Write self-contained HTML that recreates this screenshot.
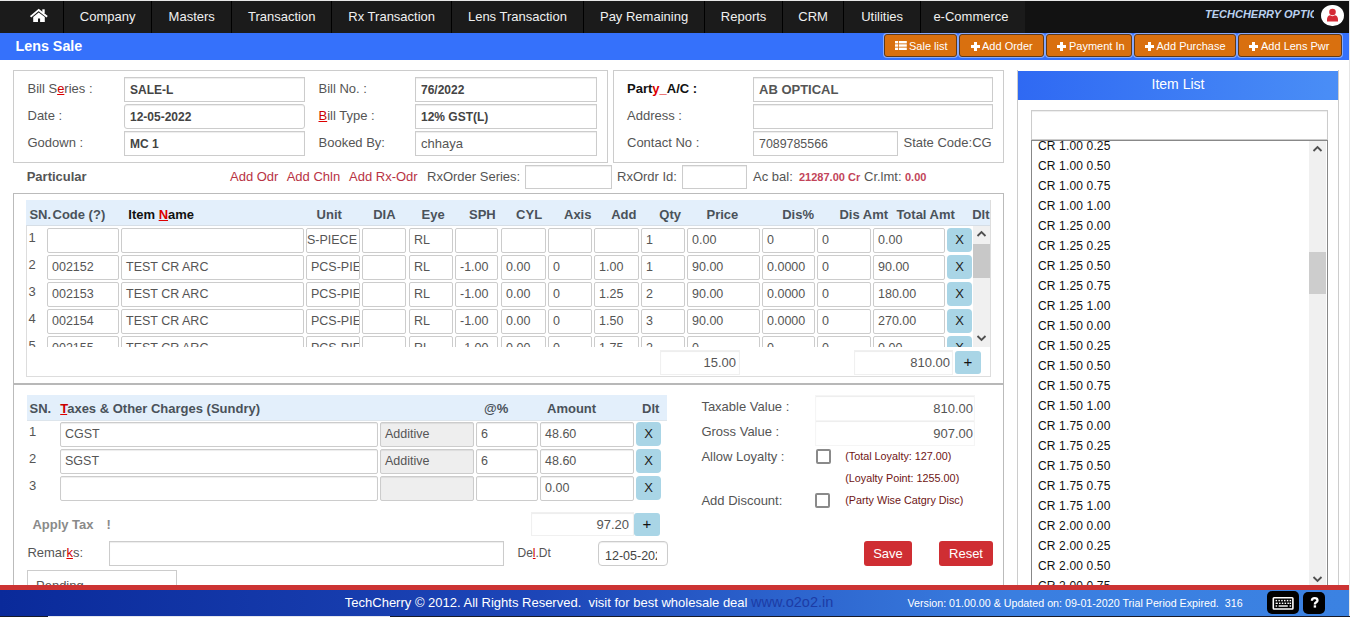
<!DOCTYPE html><html><head><meta charset="utf-8"><style>
*{margin:0;padding:0;box-sizing:content-box}
html,body{width:1350px;height:617px;overflow:hidden;background:#fff;font-family:"Liberation Sans",sans-serif}
body>div{position:absolute}
.t{position:absolute;line-height:1;white-space:nowrap}
u{text-decoration:underline;text-decoration-color:#d00;text-underline-offset:1px;color:#c00}
</style></head><body><div style="left:0px;top:0px;width:1350px;height:1px;background:#e8e8e8"></div>
<div style="left:0px;top:1px;width:1349px;height:32px;background:#121212"></div>
<div style="left:0px;top:1px;width:1025px;height:32px;background:#1b1b1b"></div>
<div style="left:63px;top:1px;width:1px;height:32px;background:#000"></div>
<div style="left:151px;top:1px;width:1px;height:32px;background:#000"></div>
<div style="left:231px;top:1px;width:1px;height:32px;background:#000"></div>
<div style="left:331px;top:1px;width:1px;height:32px;background:#000"></div>
<div style="left:451px;top:1px;width:1px;height:32px;background:#000"></div>
<div style="left:583px;top:1px;width:1px;height:32px;background:#000"></div>
<div style="left:704px;top:1px;width:1px;height:32px;background:#000"></div>
<div style="left:782px;top:1px;width:1px;height:32px;background:#000"></div>
<div style="left:843px;top:1px;width:1px;height:32px;background:#000"></div>
<div style="left:920px;top:1px;width:1px;height:32px;background:#000"></div>
<svg style="position:absolute;left:26px;top:5px" width="26" height="22" viewBox="0 0 26 22"><path d="M5.3 11.2 L12.7 4.9 L20.4 11.2" stroke="#fff" stroke-width="1.9" fill="none" stroke-linecap="square"/><rect x="16.3" y="4.3" width="2.4" height="3.8" fill="#fff"/><path d="M7.2 12 L12.7 7.4 L18.8 12 V16.9 H14.1 V13.4 H12 V16.9 H7.2 Z" fill="#fff"/></svg>
<div class="t" style="left:63.5px;width:88.30000000000001px;text-align:center;top:10.40px;font-size:13px;color:#f0f0f0">Company</div>
<div class="t" style="left:151.8px;width:79.79999999999998px;text-align:center;top:10.40px;font-size:13px;color:#f0f0f0">Masters</div>
<div class="t" style="left:231.6px;width:100.20000000000002px;text-align:center;top:10.40px;font-size:13px;color:#f0f0f0">Transaction</div>
<div class="t" style="left:331.8px;width:119.80000000000001px;text-align:center;top:10.40px;font-size:13px;color:#f0f0f0">Rx Transaction</div>
<div class="t" style="left:451.6px;width:131.69999999999993px;text-align:center;top:10.40px;font-size:13px;color:#f0f0f0">Lens Transaction</div>
<div class="t" style="left:583.3px;width:121.5px;text-align:center;top:10.40px;font-size:13px;color:#f0f0f0">Pay Remaining</div>
<div class="t" style="left:704.8px;width:77.60000000000002px;text-align:center;top:10.40px;font-size:13px;color:#f0f0f0">Reports</div>
<div class="t" style="left:782.4px;width:61.5px;text-align:center;top:10.40px;font-size:13px;color:#f0f0f0">CRM</div>
<div class="t" style="left:843.9px;width:76.5px;text-align:center;top:10.40px;font-size:13px;color:#f0f0f0">Utilities</div>
<div class="t" style="left:920.4px;width:101.10000000000002px;text-align:center;top:10.40px;font-size:13px;color:#f0f0f0">e-Commerce</div>
<div class="t " style="left:1205px;top:8.69px;font-size:11px;font-weight:bold;color:#b9d0ee;font-style:italic;width:109px;overflow:hidden">TECHCHERRY OPTIC</div>
<div style="left:1321px;top:4.6px;width:23px;height:21.8px;border-radius:50%;background:#fff"></div>
<svg style="position:absolute;left:1326px;top:8px" width="13" height="14" viewBox="0 0 13 14"><circle cx="6.5" cy="4" r="3.3" fill="#d42a35"/><path d="M1 13.5 Q0.6 7.6 4 7.3 L6.5 8.2 L9 7.3 Q12.4 7.6 12 13.5 Z" fill="#d42a35"/></svg>
<div style="left:0px;top:33px;width:1349px;height:27px;background:#3571fb"></div>
<div class="t " style="left:15.5px;top:38.70px;font-size:14.3px;font-weight:bold;color:#fff;">Lens Sale</div>
<div style="left:884px;top:34px;width:71px;height:21px;background:#d9700f;border:1px solid #5e3a1c;border-radius:3px;box-shadow:0 0 0 1px rgba(200,215,255,.55)"></div>
<div style="left:959px;top:34px;width:83px;height:21px;background:#d9700f;border:1px solid #5e3a1c;border-radius:3px;box-shadow:0 0 0 1px rgba(200,215,255,.55)"></div>
<div style="left:1046px;top:34px;width:84px;height:21px;background:#d9700f;border:1px solid #5e3a1c;border-radius:3px;box-shadow:0 0 0 1px rgba(200,215,255,.55)"></div>
<div style="left:1134px;top:34px;width:100px;height:21px;background:#d9700f;border:1px solid #5e3a1c;border-radius:3px;box-shadow:0 0 0 1px rgba(200,215,255,.55)"></div>
<div style="left:1238px;top:34px;width:102px;height:21px;background:#d9700f;border:1px solid #5e3a1c;border-radius:3px;box-shadow:0 0 0 1px rgba(200,215,255,.55)"></div>
<svg style="position:absolute;left:895px;top:41px" width="12" height="9" viewBox="0 0 12 9"><g fill="#fff"><rect x="0" y="0" width="3" height="2.4"/><rect x="3.8" y="0" width="8" height="2.4"/><rect x="0" y="3.3" width="3" height="2.4"/><rect x="3.8" y="3.3" width="8" height="2.4"/><rect x="0" y="6.6" width="3" height="2.4"/><rect x="3.8" y="6.6" width="8" height="2.4"/></g></svg>
<svg style="position:absolute;left:970.5px;top:41.5px" width="9" height="9" viewBox="0 0 9 9"><path d="M3 0H6V3H9V6H6V9H3V6H0V3H3Z" fill="#fff"/></svg>
<svg style="position:absolute;left:1056.8px;top:41.5px" width="9" height="9" viewBox="0 0 9 9"><path d="M3 0H6V3H9V6H6V9H3V6H0V3H3Z" fill="#fff"/></svg>
<svg style="position:absolute;left:1144.5px;top:41.5px" width="9" height="9" viewBox="0 0 9 9"><path d="M3 0H6V3H9V6H6V9H3V6H0V3H3Z" fill="#fff"/></svg>
<svg style="position:absolute;left:1249.2px;top:41.5px" width="9" height="9" viewBox="0 0 9 9"><path d="M3 0H6V3H9V6H6V9H3V6H0V3H3Z" fill="#fff"/></svg>
<div class="t " style="left:909px;top:40.69px;font-size:11px;color:#fff;">Sale list</div>
<div class="t " style="left:982px;top:40.69px;font-size:11px;color:#fff;">Add Order</div>
<div class="t " style="left:1069px;top:40.69px;font-size:11px;color:#fff;">Payment In</div>
<div class="t " style="left:1156.5px;top:40.69px;font-size:11px;color:#fff;">Add Purchase</div>
<div class="t " style="left:1261px;top:40.69px;font-size:11px;color:#fff;">Add Lens Pwr</div>
<div style="left:13px;top:70px;width:593px;height:91px;border:1px solid #ccc"></div>
<div style="left:613px;top:70px;width:389px;height:91px;border:1px solid #ccc"></div>
<div class="t " style="left:27.5px;top:81.50px;font-size:13px;color:#555;">Bill S<u>e</u>ries :</div>
<div style="left:124px;top:77px;width:179px;height:23px;border:1px solid #ccc;background:#fff;border-radius:0px;overflow:hidden;box-shadow:inset 0 1px 1px rgba(0,0,0,.075);"><span style="position:absolute;left:5px;top:5.72px;font-size:12px;font-weight:bold;color:#444;line-height:1;white-space:nowrap">SALE-L</span></div>
<div class="t " style="left:318.5px;top:81.50px;font-size:13px;color:#555;">Bill No. :</div>
<div style="left:415px;top:77px;width:180px;height:23px;border:1px solid #ccc;background:#fff;border-radius:0px;overflow:hidden;box-shadow:inset 0 1px 1px rgba(0,0,0,.075);"><span style="position:absolute;left:5px;top:5.72px;font-size:12px;font-weight:bold;color:#444;line-height:1;white-space:nowrap">76/2022</span></div>
<div class="t " style="left:27.5px;top:108.50px;font-size:13px;color:#555;">Date :</div>
<div style="left:124px;top:104px;width:179px;height:23px;border:1px solid #ccc;background:#fff;border-radius:3px;overflow:hidden;box-shadow:inset 0 1px 1px rgba(0,0,0,.075);"><span style="position:absolute;left:5px;top:5.72px;font-size:12px;font-weight:bold;color:#444;line-height:1;white-space:nowrap">12-05-2022</span></div>
<div class="t " style="left:318.5px;top:108.50px;font-size:13px;color:#555;"><u>B</u>ill Type :</div>
<div style="left:415px;top:104px;width:180px;height:23px;border:1px solid #ccc;background:#fff;border-radius:0px;overflow:hidden;box-shadow:inset 0 1px 1px rgba(0,0,0,.075);"><span style="position:absolute;left:5px;top:5.72px;font-size:12px;font-weight:bold;color:#444;line-height:1;white-space:nowrap">12% GST(L)</span></div>
<div class="t " style="left:27.5px;top:135.50px;font-size:13px;color:#555;">Godown :</div>
<div style="left:124px;top:131px;width:179px;height:23px;border:1px solid #ccc;background:#fff;border-radius:0px;overflow:hidden;box-shadow:inset 0 1px 1px rgba(0,0,0,.075);"><span style="position:absolute;left:5px;top:5.72px;font-size:12px;font-weight:bold;color:#444;line-height:1;white-space:nowrap">MC 1</span></div>
<div class="t " style="left:318.5px;top:135.50px;font-size:13px;color:#555;">Booked By:</div>
<div style="left:415px;top:131px;width:180px;height:23px;border:1px solid #ccc;background:#fff;border-radius:0px;overflow:hidden;box-shadow:inset 0 1px 1px rgba(0,0,0,.075);"><span style="position:absolute;left:5px;top:5.23px;font-size:13px;color:#555;line-height:1;white-space:nowrap">chhaya</span></div>
<div class="t " style="left:627px;top:81.50px;font-size:13px;font-weight:bold;color:#111;">Part<span style="color:#d00">y</span><span style="color:#d00">_</span>A/C :</div>
<div style="left:753px;top:77px;width:238px;height:23px;border:1px solid #ccc;background:#fff;border-radius:0px;overflow:hidden;box-shadow:inset 0 1px 1px rgba(0,0,0,.075);"><span style="position:absolute;left:5px;top:5.23px;font-size:13px;font-weight:bold;color:#555;line-height:1;white-space:nowrap">AB OPTICAL</span></div>
<div class="t " style="left:627px;top:108.50px;font-size:13px;color:#555;">Address :</div>
<div style="left:753px;top:104px;width:238px;height:23px;border:1px solid #ccc;background:#fff;border-radius:0px;overflow:hidden;box-shadow:inset 0 1px 1px rgba(0,0,0,.075);"></div>
<div class="t " style="left:627px;top:135.50px;font-size:13px;color:#555;">Contact No :</div>
<div style="left:753px;top:131px;width:143px;height:23px;border:1px solid #ccc;background:#fff;border-radius:0px;overflow:hidden;box-shadow:inset 0 1px 1px rgba(0,0,0,.075);"><span style="position:absolute;left:5px;top:5.52px;font-size:12.4px;color:#555;line-height:1;white-space:nowrap">7089785566</span></div>
<div class="t " style="left:903.5px;top:135.50px;font-size:13px;color:#555;">State Code:CG</div>
<div class="t " style="left:26.7px;top:170.10px;font-size:13px;font-weight:bold;color:#555;">Particular</div>
<div class="t " style="left:230px;top:170.10px;font-size:13px;color:#b83344;">Add Odr</div>
<div class="t " style="left:286.7px;top:170.10px;font-size:13px;color:#b83344;">Add Chln</div>
<div class="t " style="left:349px;top:170.10px;font-size:13px;color:#b83344;">Add Rx-Odr</div>
<div class="t " style="left:427px;top:170.10px;font-size:13px;color:#555;">RxOrder Series:</div>
<div style="left:525px;top:165px;width:85px;height:22px;border:1px solid #ccc;background:#fff;border-radius:0px;overflow:hidden;box-shadow:inset 0 1px 1px rgba(0,0,0,.075);"></div>
<div class="t " style="left:617px;top:170.10px;font-size:13px;color:#555;">RxOrdr Id:</div>
<div style="left:682px;top:165px;width:63px;height:22px;border:1px solid #ccc;background:#fff;border-radius:0px;overflow:hidden;box-shadow:inset 0 1px 1px rgba(0,0,0,.075);"></div>
<div class="t " style="left:753px;top:170.10px;font-size:13px;color:#555;">Ac bal:</div>
<div class="t " style="left:799px;top:171.79px;font-size:11px;font-weight:bold;color:#c24459;">21287.00 Cr</div>
<div class="t " style="left:864px;top:170.10px;font-size:13px;color:#555;">Cr.lmt:</div>
<div class="t " style="left:905px;top:171.79px;font-size:11px;font-weight:bold;color:#c24459;">0.00</div>
<div style="left:13px;top:193px;width:989px;height:500px;border:1px solid #bbb;border-bottom:none"></div>
<div style="left:26px;top:200px;width:963px;height:176px;border-left:1px solid #ddd;border-right:1px solid #ddd;border-bottom:1px solid #ddd"></div>
<div style="left:26px;top:200px;width:964px;height:26px;background:#e3effb"></div>
<div style="left:26px;top:225px;width:964px;height:1px;background:#d6dee6"></div>
<div style="left:14px;top:383px;width:989px;height:2px;background:#b8b8b8"></div>
<div class="t " style="left:29.4px;top:208.20px;font-size:13px;font-weight:bold;color:#4a525a;">SN.</div>
<div class="t " style="left:52.5px;top:208.20px;font-size:13px;font-weight:bold;color:#4a525a;">Code (?)</div>
<div class="t " style="left:128.3px;top:208.20px;font-size:13px;font-weight:bold;color:#111;">Item <u style="color:#d00">N</u>ame</div>
<div class="t " style="left:316.6px;top:208.20px;font-size:13px;font-weight:bold;color:#4a525a;">Unit</div>
<div class="t " style="left:373.2px;top:208.20px;font-size:13px;font-weight:bold;color:#4a525a;">DIA</div>
<div class="t " style="left:421.6px;top:208.20px;font-size:13px;font-weight:bold;color:#4a525a;">Eye</div>
<div class="t " style="left:469px;top:208.20px;font-size:13px;font-weight:bold;color:#4a525a;">SPH</div>
<div class="t " style="left:516.1px;top:208.20px;font-size:13px;font-weight:bold;color:#4a525a;">CYL</div>
<div class="t " style="left:564px;top:208.20px;font-size:13px;font-weight:bold;color:#4a525a;">Axis</div>
<div class="t " style="left:611.2px;top:208.20px;font-size:13px;font-weight:bold;color:#4a525a;">Add</div>
<div class="t " style="left:659.3px;top:208.20px;font-size:13px;font-weight:bold;color:#4a525a;">Qty</div>
<div class="t " style="left:706.5px;top:208.20px;font-size:13px;font-weight:bold;color:#4a525a;">Price</div>
<div class="t " style="left:782.2px;top:208.20px;font-size:13px;font-weight:bold;color:#4a525a;">Dis%</div>
<div class="t " style="left:839.4px;top:208.20px;font-size:13px;font-weight:bold;color:#4a525a;">Dis Amt</div>
<div class="t " style="left:896.4px;top:208.20px;font-size:13px;font-weight:bold;color:#4a525a;">Total Amt</div>
<div class="t " style="left:972.2px;top:208.20px;font-size:13px;font-weight:bold;color:#4a525a;">Dlt</div>
<div style="left:27px;top:226px;width:946px;height:121px;overflow:hidden">
<div class="t" style="left:1.6000000000000014px;top:4.80px;font-size:13px;color:#555">1</div>
<div style="position:absolute;left:20px;top:2px;width:70px;height:23px;border:1px solid #ccc;background:#fff;border-radius:2px;overflow:hidden"></div>
<div style="position:absolute;left:94px;top:2px;width:181px;height:23px;border:1px solid #ccc;background:#fff;border-radius:2px;overflow:hidden"></div>
<div style="position:absolute;left:279px;top:2px;width:52px;height:23px;border:1px solid #ccc;background:#fff;border-radius:2px;overflow:hidden"><span style="position:absolute;right:2px;top:5.2px;font-size:12.5px;color:#555;line-height:1;white-space:nowrap">PCS-PIECE</span></div>
<div style="position:absolute;left:335px;top:2px;width:42px;height:23px;border:1px solid #ccc;background:#fff;border-radius:2px;overflow:hidden"></div>
<div style="position:absolute;left:382px;top:2px;width:42px;height:23px;border:1px solid #ccc;background:#fff;border-radius:2px;overflow:hidden"><span style="position:absolute;left:4px;top:5.2px;font-size:12.5px;color:#555;line-height:1;white-space:nowrap">RL</span></div>
<div style="position:absolute;left:428px;top:2px;width:41px;height:23px;border:1px solid #ccc;background:#fff;border-radius:2px;overflow:hidden"></div>
<div style="position:absolute;left:474px;top:2px;width:43px;height:23px;border:1px solid #ccc;background:#fff;border-radius:2px;overflow:hidden"></div>
<div style="position:absolute;left:521px;top:2px;width:42px;height:23px;border:1px solid #ccc;background:#fff;border-radius:2px;overflow:hidden"></div>
<div style="position:absolute;left:567px;top:2px;width:43px;height:23px;border:1px solid #ccc;background:#fff;border-radius:2px;overflow:hidden"></div>
<div style="position:absolute;left:614px;top:2px;width:42px;height:23px;border:1px solid #ccc;background:#fff;border-radius:2px;overflow:hidden"><span style="position:absolute;left:4px;top:5.2px;font-size:12.5px;color:#555;line-height:1;white-space:nowrap">1</span></div>
<div style="position:absolute;left:660px;top:2px;width:71px;height:23px;border:1px solid #ccc;background:#fff;border-radius:2px;overflow:hidden"><span style="position:absolute;left:4px;top:5.2px;font-size:12.5px;color:#555;line-height:1;white-space:nowrap">0.00</span></div>
<div style="position:absolute;left:735px;top:2px;width:51px;height:23px;border:1px solid #ccc;background:#fff;border-radius:2px;overflow:hidden"><span style="position:absolute;left:4px;top:5.2px;font-size:12.5px;color:#555;line-height:1;white-space:nowrap">0</span></div>
<div style="position:absolute;left:790px;top:2px;width:52px;height:23px;border:1px solid #ccc;background:#fff;border-radius:2px;overflow:hidden"><span style="position:absolute;left:4px;top:5.2px;font-size:12.5px;color:#555;line-height:1;white-space:nowrap">0</span></div>
<div style="position:absolute;left:846px;top:2px;width:70px;height:23px;border:1px solid #ccc;background:#fff;border-radius:2px;overflow:hidden"><span style="position:absolute;left:4px;top:5.2px;font-size:12.5px;color:#555;line-height:1;white-space:nowrap">0.00</span></div>
<div style="position:absolute;left:920px;top:2px;width:25px;height:24px;background:#a9d5e6;border-radius:4px;color:#222;font-size:13px;line-height:24px;text-align:center">X</div>
<div class="t" style="left:1.6000000000000014px;top:31.80px;font-size:13px;color:#555">2</div>
<div style="position:absolute;left:20px;top:29px;width:70px;height:23px;border:1px solid #ccc;background:#fff;border-radius:2px;overflow:hidden"><span style="position:absolute;left:4px;top:5.2px;font-size:12.5px;color:#555;line-height:1;white-space:nowrap">002152</span></div>
<div style="position:absolute;left:94px;top:29px;width:181px;height:23px;border:1px solid #ccc;background:#fff;border-radius:2px;overflow:hidden"><span style="position:absolute;left:4px;top:5.2px;font-size:12.5px;color:#555;line-height:1;white-space:nowrap">TEST CR ARC</span></div>
<div style="position:absolute;left:279px;top:29px;width:52px;height:23px;border:1px solid #ccc;background:#fff;border-radius:2px;overflow:hidden"><span style="position:absolute;left:4px;top:5.2px;font-size:12.5px;color:#555;line-height:1;white-space:nowrap">PCS-PIECE</span></div>
<div style="position:absolute;left:335px;top:29px;width:42px;height:23px;border:1px solid #ccc;background:#fff;border-radius:2px;overflow:hidden"></div>
<div style="position:absolute;left:382px;top:29px;width:42px;height:23px;border:1px solid #ccc;background:#fff;border-radius:2px;overflow:hidden"><span style="position:absolute;left:4px;top:5.2px;font-size:12.5px;color:#555;line-height:1;white-space:nowrap">RL</span></div>
<div style="position:absolute;left:428px;top:29px;width:41px;height:23px;border:1px solid #ccc;background:#fff;border-radius:2px;overflow:hidden"><span style="position:absolute;left:4px;top:5.2px;font-size:12.5px;color:#555;line-height:1;white-space:nowrap">-1.00</span></div>
<div style="position:absolute;left:474px;top:29px;width:43px;height:23px;border:1px solid #ccc;background:#fff;border-radius:2px;overflow:hidden"><span style="position:absolute;left:4px;top:5.2px;font-size:12.5px;color:#555;line-height:1;white-space:nowrap">0.00</span></div>
<div style="position:absolute;left:521px;top:29px;width:42px;height:23px;border:1px solid #ccc;background:#fff;border-radius:2px;overflow:hidden"><span style="position:absolute;left:4px;top:5.2px;font-size:12.5px;color:#555;line-height:1;white-space:nowrap">0</span></div>
<div style="position:absolute;left:567px;top:29px;width:43px;height:23px;border:1px solid #ccc;background:#fff;border-radius:2px;overflow:hidden"><span style="position:absolute;left:4px;top:5.2px;font-size:12.5px;color:#555;line-height:1;white-space:nowrap">1.00</span></div>
<div style="position:absolute;left:614px;top:29px;width:42px;height:23px;border:1px solid #ccc;background:#fff;border-radius:2px;overflow:hidden"><span style="position:absolute;left:4px;top:5.2px;font-size:12.5px;color:#555;line-height:1;white-space:nowrap">1</span></div>
<div style="position:absolute;left:660px;top:29px;width:71px;height:23px;border:1px solid #ccc;background:#fff;border-radius:2px;overflow:hidden"><span style="position:absolute;left:4px;top:5.2px;font-size:12.5px;color:#555;line-height:1;white-space:nowrap">90.00</span></div>
<div style="position:absolute;left:735px;top:29px;width:51px;height:23px;border:1px solid #ccc;background:#fff;border-radius:2px;overflow:hidden"><span style="position:absolute;left:4px;top:5.2px;font-size:12.5px;color:#555;line-height:1;white-space:nowrap">0.0000</span></div>
<div style="position:absolute;left:790px;top:29px;width:52px;height:23px;border:1px solid #ccc;background:#fff;border-radius:2px;overflow:hidden"><span style="position:absolute;left:4px;top:5.2px;font-size:12.5px;color:#555;line-height:1;white-space:nowrap">0</span></div>
<div style="position:absolute;left:846px;top:29px;width:70px;height:23px;border:1px solid #ccc;background:#fff;border-radius:2px;overflow:hidden"><span style="position:absolute;left:4px;top:5.2px;font-size:12.5px;color:#555;line-height:1;white-space:nowrap">90.00</span></div>
<div style="position:absolute;left:920px;top:29px;width:25px;height:24px;background:#a9d5e6;border-radius:4px;color:#222;font-size:13px;line-height:24px;text-align:center">X</div>
<div class="t" style="left:1.6000000000000014px;top:58.80px;font-size:13px;color:#555">3</div>
<div style="position:absolute;left:20px;top:56px;width:70px;height:23px;border:1px solid #ccc;background:#fff;border-radius:2px;overflow:hidden"><span style="position:absolute;left:4px;top:5.2px;font-size:12.5px;color:#555;line-height:1;white-space:nowrap">002153</span></div>
<div style="position:absolute;left:94px;top:56px;width:181px;height:23px;border:1px solid #ccc;background:#fff;border-radius:2px;overflow:hidden"><span style="position:absolute;left:4px;top:5.2px;font-size:12.5px;color:#555;line-height:1;white-space:nowrap">TEST CR ARC</span></div>
<div style="position:absolute;left:279px;top:56px;width:52px;height:23px;border:1px solid #ccc;background:#fff;border-radius:2px;overflow:hidden"><span style="position:absolute;left:4px;top:5.2px;font-size:12.5px;color:#555;line-height:1;white-space:nowrap">PCS-PIECE</span></div>
<div style="position:absolute;left:335px;top:56px;width:42px;height:23px;border:1px solid #ccc;background:#fff;border-radius:2px;overflow:hidden"></div>
<div style="position:absolute;left:382px;top:56px;width:42px;height:23px;border:1px solid #ccc;background:#fff;border-radius:2px;overflow:hidden"><span style="position:absolute;left:4px;top:5.2px;font-size:12.5px;color:#555;line-height:1;white-space:nowrap">RL</span></div>
<div style="position:absolute;left:428px;top:56px;width:41px;height:23px;border:1px solid #ccc;background:#fff;border-radius:2px;overflow:hidden"><span style="position:absolute;left:4px;top:5.2px;font-size:12.5px;color:#555;line-height:1;white-space:nowrap">-1.00</span></div>
<div style="position:absolute;left:474px;top:56px;width:43px;height:23px;border:1px solid #ccc;background:#fff;border-radius:2px;overflow:hidden"><span style="position:absolute;left:4px;top:5.2px;font-size:12.5px;color:#555;line-height:1;white-space:nowrap">0.00</span></div>
<div style="position:absolute;left:521px;top:56px;width:42px;height:23px;border:1px solid #ccc;background:#fff;border-radius:2px;overflow:hidden"><span style="position:absolute;left:4px;top:5.2px;font-size:12.5px;color:#555;line-height:1;white-space:nowrap">0</span></div>
<div style="position:absolute;left:567px;top:56px;width:43px;height:23px;border:1px solid #ccc;background:#fff;border-radius:2px;overflow:hidden"><span style="position:absolute;left:4px;top:5.2px;font-size:12.5px;color:#555;line-height:1;white-space:nowrap">1.25</span></div>
<div style="position:absolute;left:614px;top:56px;width:42px;height:23px;border:1px solid #ccc;background:#fff;border-radius:2px;overflow:hidden"><span style="position:absolute;left:4px;top:5.2px;font-size:12.5px;color:#555;line-height:1;white-space:nowrap">2</span></div>
<div style="position:absolute;left:660px;top:56px;width:71px;height:23px;border:1px solid #ccc;background:#fff;border-radius:2px;overflow:hidden"><span style="position:absolute;left:4px;top:5.2px;font-size:12.5px;color:#555;line-height:1;white-space:nowrap">90.00</span></div>
<div style="position:absolute;left:735px;top:56px;width:51px;height:23px;border:1px solid #ccc;background:#fff;border-radius:2px;overflow:hidden"><span style="position:absolute;left:4px;top:5.2px;font-size:12.5px;color:#555;line-height:1;white-space:nowrap">0.0000</span></div>
<div style="position:absolute;left:790px;top:56px;width:52px;height:23px;border:1px solid #ccc;background:#fff;border-radius:2px;overflow:hidden"><span style="position:absolute;left:4px;top:5.2px;font-size:12.5px;color:#555;line-height:1;white-space:nowrap">0</span></div>
<div style="position:absolute;left:846px;top:56px;width:70px;height:23px;border:1px solid #ccc;background:#fff;border-radius:2px;overflow:hidden"><span style="position:absolute;left:4px;top:5.2px;font-size:12.5px;color:#555;line-height:1;white-space:nowrap">180.00</span></div>
<div style="position:absolute;left:920px;top:56px;width:25px;height:24px;background:#a9d5e6;border-radius:4px;color:#222;font-size:13px;line-height:24px;text-align:center">X</div>
<div class="t" style="left:1.6000000000000014px;top:85.80px;font-size:13px;color:#555">4</div>
<div style="position:absolute;left:20px;top:83px;width:70px;height:23px;border:1px solid #ccc;background:#fff;border-radius:2px;overflow:hidden"><span style="position:absolute;left:4px;top:5.2px;font-size:12.5px;color:#555;line-height:1;white-space:nowrap">002154</span></div>
<div style="position:absolute;left:94px;top:83px;width:181px;height:23px;border:1px solid #ccc;background:#fff;border-radius:2px;overflow:hidden"><span style="position:absolute;left:4px;top:5.2px;font-size:12.5px;color:#555;line-height:1;white-space:nowrap">TEST CR ARC</span></div>
<div style="position:absolute;left:279px;top:83px;width:52px;height:23px;border:1px solid #ccc;background:#fff;border-radius:2px;overflow:hidden"><span style="position:absolute;left:4px;top:5.2px;font-size:12.5px;color:#555;line-height:1;white-space:nowrap">PCS-PIECE</span></div>
<div style="position:absolute;left:335px;top:83px;width:42px;height:23px;border:1px solid #ccc;background:#fff;border-radius:2px;overflow:hidden"></div>
<div style="position:absolute;left:382px;top:83px;width:42px;height:23px;border:1px solid #ccc;background:#fff;border-radius:2px;overflow:hidden"><span style="position:absolute;left:4px;top:5.2px;font-size:12.5px;color:#555;line-height:1;white-space:nowrap">RL</span></div>
<div style="position:absolute;left:428px;top:83px;width:41px;height:23px;border:1px solid #ccc;background:#fff;border-radius:2px;overflow:hidden"><span style="position:absolute;left:4px;top:5.2px;font-size:12.5px;color:#555;line-height:1;white-space:nowrap">-1.00</span></div>
<div style="position:absolute;left:474px;top:83px;width:43px;height:23px;border:1px solid #ccc;background:#fff;border-radius:2px;overflow:hidden"><span style="position:absolute;left:4px;top:5.2px;font-size:12.5px;color:#555;line-height:1;white-space:nowrap">0.00</span></div>
<div style="position:absolute;left:521px;top:83px;width:42px;height:23px;border:1px solid #ccc;background:#fff;border-radius:2px;overflow:hidden"><span style="position:absolute;left:4px;top:5.2px;font-size:12.5px;color:#555;line-height:1;white-space:nowrap">0</span></div>
<div style="position:absolute;left:567px;top:83px;width:43px;height:23px;border:1px solid #ccc;background:#fff;border-radius:2px;overflow:hidden"><span style="position:absolute;left:4px;top:5.2px;font-size:12.5px;color:#555;line-height:1;white-space:nowrap">1.50</span></div>
<div style="position:absolute;left:614px;top:83px;width:42px;height:23px;border:1px solid #ccc;background:#fff;border-radius:2px;overflow:hidden"><span style="position:absolute;left:4px;top:5.2px;font-size:12.5px;color:#555;line-height:1;white-space:nowrap">3</span></div>
<div style="position:absolute;left:660px;top:83px;width:71px;height:23px;border:1px solid #ccc;background:#fff;border-radius:2px;overflow:hidden"><span style="position:absolute;left:4px;top:5.2px;font-size:12.5px;color:#555;line-height:1;white-space:nowrap">90.00</span></div>
<div style="position:absolute;left:735px;top:83px;width:51px;height:23px;border:1px solid #ccc;background:#fff;border-radius:2px;overflow:hidden"><span style="position:absolute;left:4px;top:5.2px;font-size:12.5px;color:#555;line-height:1;white-space:nowrap">0.0000</span></div>
<div style="position:absolute;left:790px;top:83px;width:52px;height:23px;border:1px solid #ccc;background:#fff;border-radius:2px;overflow:hidden"><span style="position:absolute;left:4px;top:5.2px;font-size:12.5px;color:#555;line-height:1;white-space:nowrap">0</span></div>
<div style="position:absolute;left:846px;top:83px;width:70px;height:23px;border:1px solid #ccc;background:#fff;border-radius:2px;overflow:hidden"><span style="position:absolute;left:4px;top:5.2px;font-size:12.5px;color:#555;line-height:1;white-space:nowrap">270.00</span></div>
<div style="position:absolute;left:920px;top:83px;width:25px;height:24px;background:#a9d5e6;border-radius:4px;color:#222;font-size:13px;line-height:24px;text-align:center">X</div>
<div class="t" style="left:1.6000000000000014px;top:112.80px;font-size:13px;color:#555">5</div>
<div style="position:absolute;left:20px;top:110px;width:70px;height:23px;border:1px solid #ccc;background:#fff;border-radius:2px;overflow:hidden"><span style="position:absolute;left:4px;top:5.2px;font-size:12.5px;color:#555;line-height:1;white-space:nowrap">002155</span></div>
<div style="position:absolute;left:94px;top:110px;width:181px;height:23px;border:1px solid #ccc;background:#fff;border-radius:2px;overflow:hidden"><span style="position:absolute;left:4px;top:5.2px;font-size:12.5px;color:#555;line-height:1;white-space:nowrap">TEST CR ARC</span></div>
<div style="position:absolute;left:279px;top:110px;width:52px;height:23px;border:1px solid #ccc;background:#fff;border-radius:2px;overflow:hidden"><span style="position:absolute;left:4px;top:5.2px;font-size:12.5px;color:#555;line-height:1;white-space:nowrap">PCS-PIECE</span></div>
<div style="position:absolute;left:335px;top:110px;width:42px;height:23px;border:1px solid #ccc;background:#fff;border-radius:2px;overflow:hidden"></div>
<div style="position:absolute;left:382px;top:110px;width:42px;height:23px;border:1px solid #ccc;background:#fff;border-radius:2px;overflow:hidden"><span style="position:absolute;left:4px;top:5.2px;font-size:12.5px;color:#555;line-height:1;white-space:nowrap">RL</span></div>
<div style="position:absolute;left:428px;top:110px;width:41px;height:23px;border:1px solid #ccc;background:#fff;border-radius:2px;overflow:hidden"><span style="position:absolute;left:4px;top:5.2px;font-size:12.5px;color:#555;line-height:1;white-space:nowrap">-1.00</span></div>
<div style="position:absolute;left:474px;top:110px;width:43px;height:23px;border:1px solid #ccc;background:#fff;border-radius:2px;overflow:hidden"><span style="position:absolute;left:4px;top:5.2px;font-size:12.5px;color:#555;line-height:1;white-space:nowrap">0.00</span></div>
<div style="position:absolute;left:521px;top:110px;width:42px;height:23px;border:1px solid #ccc;background:#fff;border-radius:2px;overflow:hidden"><span style="position:absolute;left:4px;top:5.2px;font-size:12.5px;color:#555;line-height:1;white-space:nowrap">0</span></div>
<div style="position:absolute;left:567px;top:110px;width:43px;height:23px;border:1px solid #ccc;background:#fff;border-radius:2px;overflow:hidden"><span style="position:absolute;left:4px;top:5.2px;font-size:12.5px;color:#555;line-height:1;white-space:nowrap">1.75</span></div>
<div style="position:absolute;left:614px;top:110px;width:42px;height:23px;border:1px solid #ccc;background:#fff;border-radius:2px;overflow:hidden"><span style="position:absolute;left:4px;top:5.2px;font-size:12.5px;color:#555;line-height:1;white-space:nowrap">2</span></div>
<div style="position:absolute;left:660px;top:110px;width:71px;height:23px;border:1px solid #ccc;background:#fff;border-radius:2px;overflow:hidden"><span style="position:absolute;left:4px;top:5.2px;font-size:12.5px;color:#555;line-height:1;white-space:nowrap">0</span></div>
<div style="position:absolute;left:735px;top:110px;width:51px;height:23px;border:1px solid #ccc;background:#fff;border-radius:2px;overflow:hidden"><span style="position:absolute;left:4px;top:5.2px;font-size:12.5px;color:#555;line-height:1;white-space:nowrap">0</span></div>
<div style="position:absolute;left:790px;top:110px;width:52px;height:23px;border:1px solid #ccc;background:#fff;border-radius:2px;overflow:hidden"><span style="position:absolute;left:4px;top:5.2px;font-size:12.5px;color:#555;line-height:1;white-space:nowrap">0</span></div>
<div style="position:absolute;left:846px;top:110px;width:70px;height:23px;border:1px solid #ccc;background:#fff;border-radius:2px;overflow:hidden"><span style="position:absolute;left:4px;top:5.2px;font-size:12.5px;color:#555;line-height:1;white-space:nowrap">0.00</span></div>
<div style="position:absolute;left:920px;top:110px;width:25px;height:24px;background:#a9d5e6;border-radius:4px;color:#222;font-size:13px;line-height:24px;text-align:center">X</div>
</div>
<div style="left:973px;top:226px;width:17px;height:121px;background:#f0f0f0"></div>
<div style="left:973px;top:244px;width:17px;height:34px;background:#c8c8c8"></div>
<svg style="position:absolute;left:976px;top:230px" width="11" height="8" viewBox="0 0 11 8"><path d="M1.5 6 L5.5 2 L9.5 6" stroke="#505050" stroke-width="1.8" fill="none"/></svg>
<svg style="position:absolute;left:976px;top:334px" width="11" height="8" viewBox="0 0 11 8"><path d="M1.5 2 L5.5 6 L9.5 2" stroke="#505050" stroke-width="1.8" fill="none"/></svg>
<div style="left:660px;top:350px;width:78px;height:23px;border:1px solid #f0f0f0;background:#fff;border-radius:0px;overflow:hidden;box-shadow:inset 0 1px 1px rgba(0,0,0,.075);"><span style="position:absolute;right:3px;top:5.23px;font-size:13px;color:#555;line-height:1;white-space:nowrap">15.00</span></div>
<div style="left:854px;top:350px;width:97px;height:23px;border:1px solid #f0f0f0;background:#fff;border-radius:0px;overflow:hidden;box-shadow:inset 0 1px 1px rgba(0,0,0,.075);"><span style="position:absolute;right:2px;top:5.23px;font-size:13px;color:#555;line-height:1;white-space:nowrap">810.00</span></div>
<div style="left:955px;top:351px;width:26px;height:23px;background:#a9d5e6;border-radius:3px;color:#111;font-size:15px;line-height:22px;text-align:center">+</div>
<div style="left:27px;top:395px;width:640px;height:25px;background:#e3effb"></div>
<div style="left:27px;top:420px;width:640px;height:1px;background:#dde5ec"></div>
<div class="t " style="left:29.5px;top:401.50px;font-size:13px;font-weight:bold;color:#4a525a;">SN.</div>
<div class="t " style="left:60.2px;top:401.50px;font-size:13px;font-weight:bold;color:#4a525a;"><u>T</u>axes &amp; Other Charges (Sundry)</div>
<div class="t " style="left:484px;top:401.50px;font-size:13px;font-weight:bold;color:#4a525a;">@%</div>
<div class="t " style="left:547px;top:401.50px;font-size:13px;font-weight:bold;color:#4a525a;">Amount</div>
<div class="t " style="left:642px;top:401.50px;font-size:13px;font-weight:bold;color:#4a525a;">Dlt</div>
<div class="t" style="left:29px;top:424.50px;font-size:13px;color:#555">1</div>
<div style="left:60px;top:422px;width:316px;height:23px;border:1px solid #ccc;background:#fff;border-radius:2px;overflow:hidden;box-shadow:inset 0 1px 1px rgba(0,0,0,.075);"><span style="position:absolute;left:4px;top:5.02px;font-size:12.5px;color:#555;line-height:1;white-space:nowrap">CGST</span></div>
<div style="left:380px;top:422px;width:92px;height:23px;border:1px solid #ccc;background:#eee;border-radius:2px;overflow:hidden;box-shadow:inset 0 1px 1px rgba(0,0,0,.075);"><span style="position:absolute;left:4px;top:5.02px;font-size:12.5px;color:#555;line-height:1;white-space:nowrap">Additive</span></div>
<div style="left:476px;top:422px;width:60px;height:23px;border:1px solid #ccc;background:#fff;border-radius:2px;overflow:hidden;box-shadow:inset 0 1px 1px rgba(0,0,0,.075);"><span style="position:absolute;left:4px;top:5.02px;font-size:12.5px;color:#555;line-height:1;white-space:nowrap">6</span></div>
<div style="left:540px;top:422px;width:92px;height:23px;border:1px solid #ccc;background:#fff;border-radius:2px;overflow:hidden;box-shadow:inset 0 1px 1px rgba(0,0,0,.075);"><span style="position:absolute;left:4px;top:5.02px;font-size:12.5px;color:#555;line-height:1;white-space:nowrap">48.60</span></div>
<div style="left:636px;top:422px;width:25px;height:24px;background:#a9d5e6;border-radius:4px;color:#222;font-size:13px;line-height:24px;text-align:center">X</div>
<div class="t" style="left:29px;top:451.50px;font-size:13px;color:#555">2</div>
<div style="left:60px;top:449px;width:316px;height:23px;border:1px solid #ccc;background:#fff;border-radius:2px;overflow:hidden;box-shadow:inset 0 1px 1px rgba(0,0,0,.075);"><span style="position:absolute;left:4px;top:5.02px;font-size:12.5px;color:#555;line-height:1;white-space:nowrap">SGST</span></div>
<div style="left:380px;top:449px;width:92px;height:23px;border:1px solid #ccc;background:#eee;border-radius:2px;overflow:hidden;box-shadow:inset 0 1px 1px rgba(0,0,0,.075);"><span style="position:absolute;left:4px;top:5.02px;font-size:12.5px;color:#555;line-height:1;white-space:nowrap">Additive</span></div>
<div style="left:476px;top:449px;width:60px;height:23px;border:1px solid #ccc;background:#fff;border-radius:2px;overflow:hidden;box-shadow:inset 0 1px 1px rgba(0,0,0,.075);"><span style="position:absolute;left:4px;top:5.02px;font-size:12.5px;color:#555;line-height:1;white-space:nowrap">6</span></div>
<div style="left:540px;top:449px;width:92px;height:23px;border:1px solid #ccc;background:#fff;border-radius:2px;overflow:hidden;box-shadow:inset 0 1px 1px rgba(0,0,0,.075);"><span style="position:absolute;left:4px;top:5.02px;font-size:12.5px;color:#555;line-height:1;white-space:nowrap">48.60</span></div>
<div style="left:636px;top:449px;width:25px;height:24px;background:#a9d5e6;border-radius:4px;color:#222;font-size:13px;line-height:24px;text-align:center">X</div>
<div class="t" style="left:29px;top:478.50px;font-size:13px;color:#555">3</div>
<div style="left:60px;top:476px;width:316px;height:23px;border:1px solid #ccc;background:#fff;border-radius:2px;overflow:hidden;box-shadow:inset 0 1px 1px rgba(0,0,0,.075);"></div>
<div style="left:380px;top:476px;width:92px;height:23px;border:1px solid #ccc;background:#eee;border-radius:2px;overflow:hidden;box-shadow:inset 0 1px 1px rgba(0,0,0,.075);"></div>
<div style="left:476px;top:476px;width:60px;height:23px;border:1px solid #ccc;background:#fff;border-radius:2px;overflow:hidden;box-shadow:inset 0 1px 1px rgba(0,0,0,.075);"></div>
<div style="left:540px;top:476px;width:92px;height:23px;border:1px solid #ccc;background:#fff;border-radius:2px;overflow:hidden;box-shadow:inset 0 1px 1px rgba(0,0,0,.075);"><span style="position:absolute;left:4px;top:5.02px;font-size:12.5px;color:#555;line-height:1;white-space:nowrap">0.00</span></div>
<div style="left:636px;top:476px;width:25px;height:24px;background:#a9d5e6;border-radius:4px;color:#222;font-size:13px;line-height:24px;text-align:center">X</div>
<div class="t " style="left:32.4px;top:517.80px;font-size:13px;font-weight:bold;color:#8a8a8a;">Apply Tax</div>
<div class="t " style="left:106.5px;top:517.80px;font-size:13px;font-weight:bold;color:#8a8a8a;">!</div>
<div style="left:531px;top:512px;width:101px;height:22px;border:1px solid #f0f0f0;background:#fff;border-radius:0px;overflow:hidden;box-shadow:inset 0 1px 1px rgba(0,0,0,.075);"><span style="position:absolute;right:4px;top:4.73px;font-size:13px;color:#555;line-height:1;white-space:nowrap">97.20</span></div>
<div style="left:634px;top:513px;width:26px;height:23px;background:#a9d5e6;border-radius:3px;color:#111;font-size:15px;line-height:22px;text-align:center">+</div>
<div class="t " style="left:27.4px;top:545.90px;font-size:13px;color:#555;">Remar<u>k</u>s:</div>
<div style="left:109px;top:541px;width:393px;height:23px;border:1px solid #ccc;background:#fff;border-radius:0px;overflow:hidden;box-shadow:inset 0 1px 1px rgba(0,0,0,.075);"></div>
<div class="t " style="left:517.5px;top:546.74px;font-size:12px;color:#555;">De<u>l</u>.Dt</div>
<div style="left:598px;top:541px;width:68px;height:23px;border:1px solid #ccc;border-radius:4px;box-shadow:inset 0 1px 1px rgba(0,0,0,.075)"><div style="position:absolute;left:6px;top:0;width:52px;height:23px;overflow:hidden"><span style="position:absolute;left:0;top:7.5px;font-size:12.5px;line-height:1;color:#444;white-space:nowrap">12-05-2022</span></div></div>
<div style="left:27px;top:570px;width:148px;height:30px;border:1px solid #ccc"></div>
<div class="t " style="left:36px;top:579.00px;font-size:13px;color:#555;">Pending</div>
<div class="t " style="left:701.4px;top:400.30px;font-size:13px;color:#555;">Taxable Value :</div>
<div style="left:815px;top:395px;width:158px;height:24px;border:1px solid #f5f5f5;background:#fff;border-radius:0px;overflow:hidden;box-shadow:inset 0 1px 1px rgba(0,0,0,.075);"><span style="position:absolute;right:1px;top:5.73px;font-size:13px;color:#555;line-height:1;white-space:nowrap">810.00</span></div>
<div class="t " style="left:701.4px;top:425.20px;font-size:13px;color:#555;">Gross Value :</div>
<div style="left:815px;top:420px;width:158px;height:24px;border:1px solid #f5f5f5;background:#fff;border-radius:0px;overflow:hidden;box-shadow:inset 0 1px 1px rgba(0,0,0,.075);"><span style="position:absolute;right:1px;top:5.73px;font-size:13px;color:#555;line-height:1;white-space:nowrap">907.00</span></div>
<div class="t " style="left:701.4px;top:450.00px;font-size:13px;color:#555;">Allow Loyalty :</div>
<div style="left:816px;top:449px;width:11px;height:11px;border:2px solid #8a8a8a;border-radius:2px"></div>
<div class="t " style="left:845.2px;top:451.46px;font-size:10.8px;color:#6e1414;">(Total Loyalty: 127.00)</div>
<div class="t " style="left:845.2px;top:473.26px;font-size:10.8px;color:#6e1414;">(Loyalty Point: 1255.00)</div>
<div class="t " style="left:701.4px;top:494.00px;font-size:13px;color:#555;">Add Discount:</div>
<div style="left:815px;top:493px;width:11px;height:11px;border:2px solid #8a8a8a;border-radius:2px"></div>
<div class="t " style="left:845.2px;top:494.56px;font-size:10.8px;color:#6e1414;">(Party Wise Catgry Disc)</div>
<div style="left:864px;top:541px;width:48px;height:25px;background:#cf2e33;border-radius:3px;color:#fff;font-size:13px;line-height:25px;text-align:center">Save</div>
<div style="left:939px;top:541px;width:54px;height:25px;background:#cf2e33;border-radius:3px;color:#fff;font-size:13px;line-height:25px;text-align:center">Reset</div>
<div style="left:1017px;top:70px;width:320px;height:560px;border-left:1px solid #ccc;border-right:1px solid #ccc"></div>
<div style="left:1018px;top:71px;width:320px;height:29px;background:linear-gradient(90deg,#2f69f3,#4a8ef6)"></div>
<div class="t" style="left:1018px;width:320px;text-align:center;top:77px;font-size:14px;color:#fff">Item List</div>
<div style="left:1031px;top:110px;width:295px;height:28px;border:1px solid #ccc;background:#fff;border-radius:0px;overflow:hidden;box-shadow:inset 0 1px 1px rgba(0,0,0,.075);"></div>
<div style="left:1031px;top:140px;width:295px;height:460px;border:1px solid #888;border-bottom:none;overflow:hidden">
<div class="t" style="left:6px;top:-0.96px;font-size:12px;color:#111;letter-spacing:0.15px">CR 1.00 0.25</div>
<div class="t" style="left:6px;top:19.04px;font-size:12px;color:#111;letter-spacing:0.15px">CR 1.00 0.50</div>
<div class="t" style="left:6px;top:39.04px;font-size:12px;color:#111;letter-spacing:0.15px">CR 1.00 0.75</div>
<div class="t" style="left:6px;top:59.04px;font-size:12px;color:#111;letter-spacing:0.15px">CR 1.00 1.00</div>
<div class="t" style="left:6px;top:79.04px;font-size:12px;color:#111;letter-spacing:0.15px">CR 1.25 0.00</div>
<div class="t" style="left:6px;top:99.04px;font-size:12px;color:#111;letter-spacing:0.15px">CR 1.25 0.25</div>
<div class="t" style="left:6px;top:119.04px;font-size:12px;color:#111;letter-spacing:0.15px">CR 1.25 0.50</div>
<div class="t" style="left:6px;top:139.04px;font-size:12px;color:#111;letter-spacing:0.15px">CR 1.25 0.75</div>
<div class="t" style="left:6px;top:159.04px;font-size:12px;color:#111;letter-spacing:0.15px">CR 1.25 1.00</div>
<div class="t" style="left:6px;top:179.04px;font-size:12px;color:#111;letter-spacing:0.15px">CR 1.50 0.00</div>
<div class="t" style="left:6px;top:199.04px;font-size:12px;color:#111;letter-spacing:0.15px">CR 1.50 0.25</div>
<div class="t" style="left:6px;top:219.04px;font-size:12px;color:#111;letter-spacing:0.15px">CR 1.50 0.50</div>
<div class="t" style="left:6px;top:239.04px;font-size:12px;color:#111;letter-spacing:0.15px">CR 1.50 0.75</div>
<div class="t" style="left:6px;top:259.04px;font-size:12px;color:#111;letter-spacing:0.15px">CR 1.50 1.00</div>
<div class="t" style="left:6px;top:279.04px;font-size:12px;color:#111;letter-spacing:0.15px">CR 1.75 0.00</div>
<div class="t" style="left:6px;top:299.04px;font-size:12px;color:#111;letter-spacing:0.15px">CR 1.75 0.25</div>
<div class="t" style="left:6px;top:319.04px;font-size:12px;color:#111;letter-spacing:0.15px">CR 1.75 0.50</div>
<div class="t" style="left:6px;top:339.04px;font-size:12px;color:#111;letter-spacing:0.15px">CR 1.75 0.75</div>
<div class="t" style="left:6px;top:359.04px;font-size:12px;color:#111;letter-spacing:0.15px">CR 1.75 1.00</div>
<div class="t" style="left:6px;top:379.04px;font-size:12px;color:#111;letter-spacing:0.15px">CR 2.00 0.00</div>
<div class="t" style="left:6px;top:399.04px;font-size:12px;color:#111;letter-spacing:0.15px">CR 2.00 0.25</div>
<div class="t" style="left:6px;top:419.04px;font-size:12px;color:#111;letter-spacing:0.15px">CR 2.00 0.50</div>
<div class="t" style="left:6px;top:439.04px;font-size:12px;color:#111;letter-spacing:0.15px">CR 2.00 0.75</div>
</div>
<div style="left:1309px;top:141px;width:17px;height:445px;background:#f0f0f0"></div>
<div style="left:1309px;top:252px;width:17px;height:42px;background:#cdcdcd"></div>
<svg style="position:absolute;left:1312px;top:145px" width="11" height="8" viewBox="0 0 11 8"><path d="M1.5 6 L5.5 2 L9.5 6" stroke="#505050" stroke-width="1.8" fill="none"/></svg>
<svg style="position:absolute;left:1312px;top:575px" width="11" height="8" viewBox="0 0 11 8"><path d="M1.5 2 L5.5 6 L9.5 2" stroke="#505050" stroke-width="1.8" fill="none"/></svg>
<div style="left:1349px;top:0px;width:1px;height:617px;background:#e6e6e6"></div>
<div style="left:0px;top:585px;width:1349px;height:5px;background:#cc3333"></div>
<div style="left:0px;top:590px;width:1349px;height:26px;background:linear-gradient(90deg,#0a2a9a 0%,#1d46b8 40%,#3a7ee0 75%,#3b82e2 100%)"></div>
<div class="t " style="left:344.8px;top:594.60px;font-size:13px;color:#fff;">TechCherry &copy; 2012. All Rights Reserved.&nbsp; visit for best wholesale deal <span style="color:#1c3ca6;font-size:14.5px">www.o2o2.in</span></div>
<div class="t " style="left:907.5px;top:597.84px;font-size:10.7px;color:#fff;">Version: 01.00.00 &amp; Updated on: 09-01-2020 Trial Period Expired.&nbsp; 316</div>
<div style="left:1267px;top:591px;width:32px;height:23px;background:#000;border-radius:5px"></div>
<svg style="position:absolute;left:1272px;top:596px" width="22" height="15" viewBox="0 0 22 15"><rect x="1.3" y="1.8" width="19.6" height="11.2" rx="0.8" fill="none" stroke="#fff" stroke-width="1.6"/><g fill="#fff"><rect x="3.6" y="3.9" width="1.5" height="1.4"/><rect x="6.4" y="3.9" width="1.5" height="1.4"/><rect x="9.2" y="3.9" width="1.5" height="1.4"/><rect x="12" y="3.9" width="1.5" height="1.4"/><rect x="14.8" y="3.9" width="1.5" height="1.4"/><rect x="17.6" y="3.9" width="1.5" height="1.4"/><rect x="3.6" y="6.6" width="2.2" height="1.4"/><rect x="7.0" y="6.6" width="1.5" height="1.4"/><rect x="9.8" y="6.6" width="1.5" height="1.4"/><rect x="12.6" y="6.6" width="1.5" height="1.4"/><rect x="15.4" y="6.6" width="1.5" height="1.4"/><rect x="17.6" y="6.6" width="1.5" height="1.4"/><rect x="3.6" y="9.3" width="1.5" height="1.4"/><rect x="6.6" y="9.3" width="9.2" height="1.4"/><rect x="17.6" y="9.3" width="1.5" height="1.4"/></g></svg>
<div style="left:1303px;top:592px;width:22px;height:22px;background:#000;border-radius:5px"></div>
<svg style="position:absolute;left:1310px;top:597px" width="10" height="11" viewBox="0 0 10 11"><path d="M1.9 3.7 C1.9 1.9 3.1 1.2 4.7 1.2 C6.4 1.2 7.5 2.1 7.5 3.4 C7.5 5.1 4.9 5.3 4.9 7.0 V7.5" stroke="#fff" stroke-width="2.3" fill="none"/><rect x="3.7" y="8.3" width="2.4" height="2.3" fill="#fff"/></svg>
<div style="left:0px;top:616px;width:1350px;height:1px;background:#161a2a"></div>
<div style="left:48px;top:616px;width:342px;height:1px;background:#e4e6ee"></div></body></html>
